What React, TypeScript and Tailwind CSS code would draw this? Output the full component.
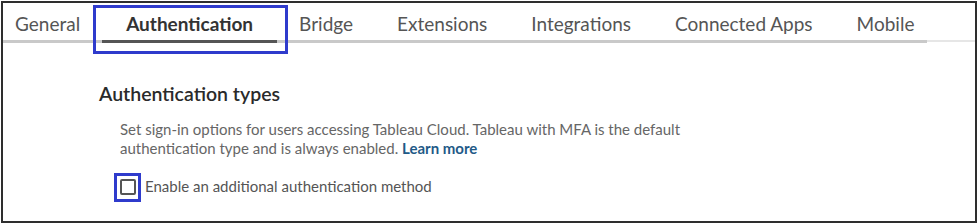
import { useState } from 'react';

const tabs = ['General', 'Authentication', 'Bridge', 'Extensions', 'Integrations', 'Connected Apps', 'Mobile'];

export default function App() {
    const [active, setActive] = useState('Authentication');
    const [checked, setChecked] = useState(false);

    return (
        <div className="w-[979px] h-[224px] bg-white pl-[1px] pt-[1px] pr-[2px] pb-[1px] font-['Lato','Liberation_Sans',sans-serif]">
            <div className="relative h-full border-2 border-[#2e2e2e] overflow-hidden">
                {/* Tabs */}
                <div className="flex items-end">
                    <div className="flex shrink-0 w-[934px] border-b-[3px] border-[#c9c9c9] -ml-[10px] pt-[9px]">
                        {tabs.map(tab => (
                            <button
                                key={tab}
                                onClick={() => setActive(tab)}
                                className={
                                    tab === active
                                        ? 'shrink-0 whitespace-nowrap px-6 pb-[4px] -mb-[3px] border-b-[3px] border-[#555] text-[19px] leading-[24px] font-bold text-[#333]'
                                        : 'shrink-0 whitespace-nowrap px-[22px] pb-[4px] text-[19px] leading-[24px] text-[#555]'
                                }
                            >
                                {tab}
                            </button>
                        ))}
                    </div>
                    <div className="flex-1 h-[2px] mb-[1px] bg-[#e6e6e6]" />
                </div>

                {/* Highlight around active tab */}
                <div className="absolute left-[90px] top-[2px] w-[195px] h-[49px] border-[3px] border-[#2f3bcc]" />

                {/* Content */}
                <div className="pl-[96px] pt-[39px]">
                    <h2 className="text-[19.5px] leading-[24px] font-semibold text-[#2a2a2a]">Authentication types</h2>
                    <div className="pl-[21px] pt-[14px]">
                        <p className="text-[15px] leading-[19px] text-[#666] w-[600px]">
                            Set sign-in options for users accessing Tableau Cloud. Tableau with MFA is the default
                            authentication type and is always enabled.{' '}
                            <a className="font-bold text-[#1f5a87]">Learn more</a>
                        </p>
                        <label className="flex items-center gap-[9px] pt-[19px] cursor-pointer">
                            <span className="relative">
                                <input
                                    type="checkbox"
                                    checked={checked}
                                    onChange={e => setChecked(e.target.checked)}
                                    className="sr-only"
                                />
                                <span className="block w-[16px] h-[16px] border-2 border-[#555] rounded-[2px] bg-white" />
                                <span className="absolute -left-[6px] -top-[6px] w-[27px] h-[29px] border-[3px] border-[#2f3bcc]" />
                            </span>
                            <span className="text-[15px] leading-[19px] text-[#555]">Enable an additional authentication method</span>
                        </label>
                    </div>
                </div>
            </div>
        </div>
    );
}
